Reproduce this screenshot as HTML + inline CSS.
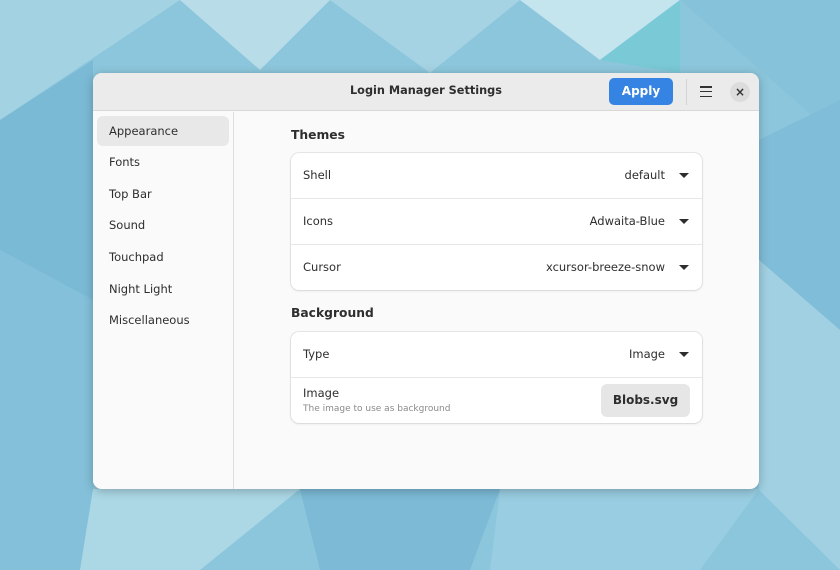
<!DOCTYPE html>
<html><head><meta charset="utf-8"><style>
*{margin:0;padding:0;box-sizing:border-box}
body{width:840px;height:570px;overflow:hidden;position:relative;font-family:"DejaVu Sans","Liberation Sans",sans-serif;background:#8cc4dc}
svg.bg{position:absolute;left:0;top:0}
.win{position:absolute;left:93px;top:73px;width:666px;height:416px;border-radius:9px;overflow:hidden;background:#fafafa;box-shadow:0 2px 10px rgba(0,0,0,.25)}
.hdr{position:absolute;left:0;top:0;width:666px;height:38px;background:#ebebeb;border-bottom:1px solid #d8d8d8}
.title{position:absolute;left:0;width:666px;top:11px;text-align:center;font-size:11.3px;font-weight:bold;color:#2e2e2e}
.apply{position:absolute;left:516px;top:5px;width:64px;height:27px;background:#3584e4;border-radius:5px;color:#fff;font-weight:bold;font-size:12px;text-align:center;line-height:27px}
.sep{position:absolute;left:593px;top:6px;width:1px;height:26px;background:#d4d4d4}
.menu{position:absolute;left:607px;top:13px;width:12px}
.menu i{display:block;height:1.6px;background:#333;margin-bottom:3.2px}
.close{position:absolute;left:637px;top:9px;width:20px;height:20px;border-radius:50%;background:#dcdcdc;text-align:center;line-height:20px;font-size:12px;font-weight:bold;color:#333}
.side{position:absolute;left:0;top:39px;width:141px;height:377px;background:#fafafa;border-right:1px solid #dedede}
.si{position:absolute;left:4px;width:132px;height:30px;border-radius:6px;font-size:11.5px;color:#2e2e2e;padding-left:12px;line-height:30px}
.si.sel{background:#e8e8e8}
.h{position:absolute;font-weight:bold;font-size:12.3px;color:#2e2e2e}
.card{position:absolute;left:198px;width:411px;background:#fff;border-radius:8px;box-shadow:0 0 0 1px rgba(0,0,0,.07),0 1px 3px rgba(0,0,0,.08)}
.row{position:relative;height:46px;border-bottom:1px solid #e8e8e8;font-size:11.5px;color:#2e2e2e}
.row:last-child{border-bottom:none;height:45px}
.row .l{position:absolute;left:12px;top:15px}
.row .r{position:absolute;right:37px;top:15px}
.row .a{position:absolute;right:13px;top:20px;width:0;height:0;border-left:5px solid transparent;border-right:5px solid transparent;border-top:5px solid #2e2e2e}
.btn{position:absolute;right:12px;top:6px;width:89px;height:33px;background:#e6e6e6;border-radius:6px;text-align:center;line-height:33px;font-weight:bold;font-size:12px}
</style></head><body>
<svg class="bg" width="840" height="570">
<rect width="840" height="570" fill="#8cc6dc"/>
<polygon points="0,0 180,0 0,120" fill="#a3d3e3"/>
<polygon points="180,0 330,0 260,70" fill="#b8dde8"/>
<polygon points="330,0 520,0 430,73" fill="#a5d3e3"/>
<polygon points="520,0 680,0 600,60" fill="#c4e4ee"/>
<polygon points="600,60 680,0 680,73" fill="#7ac9d6"/>
<polygon points="680,0 840,0 840,140" fill="#86c2da"/>
<polygon points="0,120 93,60 93,300 0,250" fill="#7bbad5"/>
<polygon points="0,250 93,300 93,570 0,570" fill="#84c0d9"/>
<polygon points="759,140 840,100 840,330 759,260" fill="#80bdd8"/>
<polygon points="759,260 840,330 840,570 759,490" fill="#a0d0e2"/>
<polygon points="93,489 300,489 200,570 80,570" fill="#acd8e6"/>
<polygon points="300,489 500,489 470,570 320,570" fill="#7cbad6"/>
<polygon points="500,489 759,489 700,570 490,570" fill="#99cde1"/>
</svg>
<div class="win">
<div class="hdr"><div class="title">Login Manager Settings</div><div class="apply">Apply</div><div class="sep"></div><div class="menu"><i></i><i></i><i></i></div><div class="close">×</div></div>
<div class="side">
<div class="si sel" style="top:4px">Appearance</div>
<div class="si" style="top:35px">Fonts</div>
<div class="si" style="top:67px">Top Bar</div>
<div class="si" style="top:98px">Sound</div>
<div class="si" style="top:130px">Touchpad</div>
<div class="si" style="top:162px">Night Light</div>
<div class="si" style="top:193px">Miscellaneous</div>
</div>
<div class="h" style="left:198px;top:55px">Themes</div>
<div class="card" style="top:80px">
<div class="row"><span class="l">Shell</span><span class="r">default</span><span class="a"></span></div>
<div class="row"><span class="l">Icons</span><span class="r">Adwaita-Blue</span><span class="a"></span></div>
<div class="row"><span class="l">Cursor</span><span class="r">xcursor-breeze-snow</span><span class="a"></span></div>
</div>
<div class="h" style="left:198px;top:233px">Background</div>
<div class="card" style="top:259px">
<div class="row"><span class="l">Type</span><span class="r">Image</span><span class="a"></span></div>
<div class="row"><span class="l" style="top:8px">Image</span><span style="position:absolute;left:12px;top:26px;font-size:9px;color:#8a8a8a">The image to use as background</span><div class="btn">Blobs.svg</div></div>
</div>
</div>
</body></html>
